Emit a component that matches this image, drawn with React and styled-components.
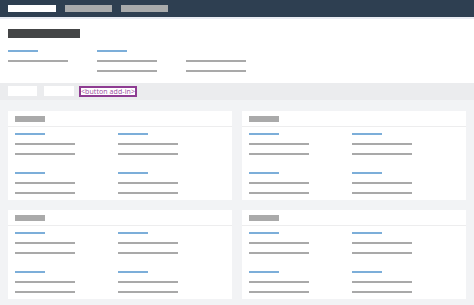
import React from "react";
import styled, { createGlobalStyle } from "styled-components";

const Global = createGlobalStyle`
  html, body { margin: 0; padding: 0; background: #f2f3f5; overflow: hidden; }
  body { font-family: "Open Sans", "Liberation Sans", sans-serif; }
`;

const Page = styled.div`
  width: 474px;
  height: 305px;
  display: flex;
  flex-direction: column;
  background: #f2f3f5;
`;

const TopBar = styled.header`
  height: 17px;
  background: #2e3f51;
  display: flex;
  align-items: flex-start;
  gap: 9px;
  padding: 5px 0 0 8px;
  box-sizing: border-box;
  border-bottom: 2px solid #e9ecf3;
  box-sizing: content-box;
  height: 12px;
`;

const NavPill = styled.div`
  width: ${(p) => p.$w}px;
  height: 7px;
  background: ${(p) => (p.$active ? "#ffffff" : "#a9abac")};
`;

const PageHead = styled.section`
  background: #ffffff;
  height: 64px;
  box-sizing: border-box;
  padding: 10px 0 0 8px;
`;

const Title = styled.div`
  width: 72px;
  height: 9px;
  background: #444546;
`;

const HeadFields = styled.div`
  display: grid;
  grid-template-columns: repeat(3, 89px);
  margin-top: 12px;
`;

const Field = styled.div`
  display: flex;
  flex-direction: column;
  gap: 8px;
`;

const Line = styled.div`
  height: 2px;
  width: ${(p) => p.$w}px;
  background: ${(p) => (p.$accent ? "#7caed9" : "#a9a9a9")};
  visibility: ${(p) => (p.$hidden ? "hidden" : "visible")};
`;

const Toolbar = styled.div`
  height: 17px;
  background: #ebecee;
  display: flex;
  align-items: flex-start;
  padding: 3px 0 0 8px;
  box-sizing: border-box;
`;

const ToolButton = styled.div`
  width: ${(p) => p.$w}px;
  height: 10px;
  background: #ffffff;
  margin-right: ${(p) => p.$gap}px;
`;

const AddInButton = styled.button`
  height: 11px;
  width: 58px;
  box-sizing: border-box;
  border: 2px solid #8e3c92;
  background: #ffffff;
  color: #9a4b9e;
  font-family: "Open Sans", "Liberation Sans", sans-serif;
  font-size: 7px;
  line-height: 7px;
  padding: 0;
  display: flex;
  align-items: center;
  justify-content: center;
  white-space: nowrap;
  letter-spacing: 0.1px;
`;

const CardGrid = styled.main`
  display: grid;
  grid-template-columns: 224px 224px;
  gap: 10px;
  padding: 11px 0 0 8px;
`;

const Card = styled.article`
  background: #ffffff;
  height: 89px;
  display: flex;
  flex-direction: column;
`;

const CardHeader = styled.div`
  height: 15px;
  border-bottom: 1px solid #ededee;
  padding: 5px 0 0 7px;
  box-sizing: content-box;
  height: 10px;
`;

const CardTitle = styled.div`
  width: 30px;
  height: 6px;
  background: #aaaaaa;
`;

const CardBody = styled.div`
  display: grid;
  grid-template-columns: 103px 103px;
  row-gap: 17px;
  padding: 6px 7px;
`;

const headFields = [
  { accent: true, lines: 1 },
  { accent: true, lines: 2 },
  { accent: false, lines: 2 },
];

function CardField() {
  return (
    <Field>
      <Line $accent $w={30} />
      <Line $w={60} />
      <Line $w={60} />
    </Field>
  );
}

function InfoCard() {
  return (
    <Card>
      <CardHeader>
        <CardTitle />
      </CardHeader>
      <CardBody>
        <CardField />
        <CardField />
        <CardField />
        <CardField />
      </CardBody>
    </Card>
  );
}

export default function App() {
  return (
    <Page>
      <Global />
      <TopBar>
        <NavPill $active $w={48} />
        <NavPill $w={47} />
        <NavPill $w={47} />
      </TopBar>
      <PageHead>
        <Title />
        <HeadFields>
          {headFields.map((f, i) => (
            <Field key={i}>
              <Line $accent $w={30} $hidden={!f.accent} />
              {Array.from({ length: f.lines }).map((_, j) => (
                <Line key={j} $w={60} />
              ))}
            </Field>
          ))}
        </HeadFields>
      </PageHead>
      <Toolbar>
        <ToolButton $w={29} $gap={7} />
        <ToolButton $w={30} $gap={5} />
        <AddInButton>&lt;button add-in&gt;</AddInButton>
      </Toolbar>
      <CardGrid>
        <InfoCard />
        <InfoCard />
        <InfoCard />
        <InfoCard />
      </CardGrid>
    </Page>
  );
}
